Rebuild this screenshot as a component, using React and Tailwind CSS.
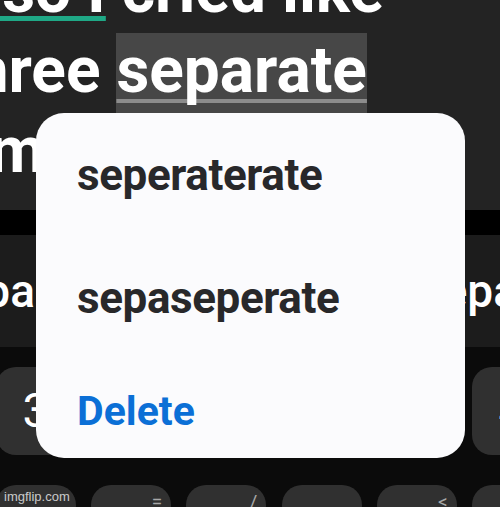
import React from 'react';

const ROW1 = ['', '', '', '', '', ''];
const ROW2 = ['_', '=', '/', '', '<', ''];

function KeyRow({ labels, tall, className }) {
  return (
    <div className={`flex gap-[15.2px] ml-[-4px] ${className || ''}`}>
      {labels.map((l, i) => (
        <div
          key={i}
          className={`w-[80px] shrink-0 rounded-[20px] bg-[#303030] ${tall ? 'h-[88px] flex items-center justify-center' : 'h-[40px] flex justify-end pr-[9px] pt-[7px]'}`}
        >
          {tall ? (
            <span className="text-[48px] text-white leading-none">{i === 0 ? '3' : i === 5 ? '4' : ''}</span>
          ) : (
            <span className="text-[19px] leading-none text-[#a8a8a8]">{l}</span>
          )}
        </div>
      ))}
    </div>
  );
}

export default function App() {
  return (
    <div className="relative w-[500px] h-[507px] overflow-hidden flex flex-col bg-[#0b0b0b]" style={{ fontFamily: 'Roboto, "Noto Sans", sans-serif' }}>
      {/* editor */}
      <div className="h-[210px] shrink-0 bg-[#232323] overflow-hidden">
        <div className="mt-[-49px] ml-[-49px] text-[64px] leading-[80px] font-bold text-white whitespace-nowrap">
          <div>
            <span className="underline decoration-[#1fa886] decoration-[5px] underline-offset-[4px] [text-decoration-skip-ink:none]">also I</span> cried like
          </div>
          <div>
            three{' '}
            <span className="bg-[#474747] pb-[7px] underline decoration-[#8c8c8c] decoration-[4px] underline-offset-[7px] [text-decoration-skip-ink:none]">separate</span>
          </div>
          <div>times</div>
        </div>
      </div>

      <div className="h-[25px] shrink-0 bg-black" />

      {/* suggestions */}
      <div className="h-[112px] shrink-0 bg-[#1c1c1c] flex items-center overflow-hidden text-[46px] font-medium text-white whitespace-nowrap">
        <div className="w-[35px] shrink-0 flex justify-end">
          <span>sepa</span>
        </div>
        <div className="ml-[384px] shrink-0">sepa</div>
      </div>

      {/* keyboard */}
      <div className="flex-1 pt-[20px]">
        <KeyRow labels={ROW1} tall />
        <KeyRow labels={ROW2} className="mt-[30px]" />
      </div>

      {/* popup */}
      <div className="absolute left-[36px] top-[113px] w-[429px] h-[345px] rounded-[28px] bg-[#fbfbfd] pl-[41px] pt-[40px] flex flex-col">
        <div className="text-[44px] leading-none font-bold text-[#28282a] tracking-[-0.4px]">seperaterate</div>
        <div className="mt-[79px] text-[44px] leading-none font-bold text-[#28282a] tracking-[-0.4px]">sepaseperate</div>
        <div className="mt-[71px] text-[41px] leading-none font-bold text-[#0b6fd6]">Delete</div>
      </div>

      <div className="absolute left-[4px] bottom-[1px] text-[13px] text-white/75" style={{ fontFamily: '"Liberation Sans", Arial, sans-serif' }}>
        imgflip.com
      </div>
    </div>
  );
}
